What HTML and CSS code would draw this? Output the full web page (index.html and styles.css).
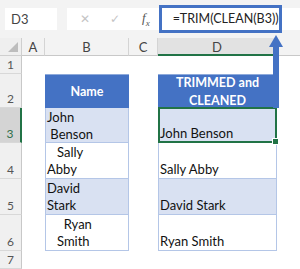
FILE: index.html
```html
<!DOCTYPE html>
<html>
<head>
<meta charset="utf-8">
<link rel="stylesheet" href="styles.css">
</head>
<body>
<div class="app">
  <div class="fbar">
    <div class="namebox">D3</div>
    <div class="editbox">
      <span class="ico x">&#x2715;</span>
      <span class="ico ok">&#x2713;</span>
      <span class="fx">f<sub>x</sub></span>
      <div class="formula">=TRIM(CLEAN(B3))</div>
    </div>
  </div>
  <div class="sheet">
    <div class="corner"><span class="tri"></span></div>
    <div class="ch">A</div>
    <div class="ch">B</div>
    <div class="ch">C</div>
    <div class="ch active">D</div>
    <div class="ch last"></div>

    <div class="rh">1</div>
    <div class="c"></div><div class="c"></div><div class="c"></div><div class="c"></div><div class="c"></div>

    <div class="rh">2</div>
    <div class="c"></div>
    <div class="c hd">Name</div>
    <div class="c"></div>
    <div class="c hd">TRIMMED and<br>CLEANED</div>
    <div class="c"></div>

    <div class="rh sel">3</div>
    <div class="c"></div>
    <div class="c tb band">John
 Benson</div>
    <div class="c"></div>
    <div class="c tb band bot selected">John Benson<span class="handle"></span></div>
    <div class="c"></div>

    <div class="rh">4</div>
    <div class="c"></div>
    <div class="c tb">   Sally
Abby</div>
    <div class="c"></div>
    <div class="c tb bot">Sally Abby</div>
    <div class="c"></div>

    <div class="rh">5</div>
    <div class="c"></div>
    <div class="c tb band">David
Stark</div>
    <div class="c"></div>
    <div class="c tb band bot">David Stark</div>
    <div class="c"></div>

    <div class="rh">6</div>
    <div class="c"></div>
    <div class="c tb">     Ryan
   Smith</div>
    <div class="c"></div>
    <div class="c tb bot">Ryan Smith</div>
    <div class="c"></div>

    <div class="rh">7</div>
    <div class="c"></div><div class="c"></div><div class="c"></div><div class="c"></div><div class="c"></div>
  </div>
  <svg class="arrow" width="20" height="80" viewBox="0 0 20 80">
    <polygon points="1,12 8,0 15,12" fill="#4472c4"/>
    <rect x="5" y="10" width="6" height="63" fill="#4472c4"/>
  </svg>
</div>
</body>
</html>
```
FILE: styles.css
```css
html, body {
  margin: 0;
  padding: 0;
  background: #ffffff;
}
.app {
  position: relative;
  width: 300px;
  height: 269px;
  overflow: hidden;
  font-family: Lato, "Open Sans", sans-serif;
  background: #ffffff;
}
.fbar {
  height: 38px;
  background: #f3f3f3;
  display: flex;
  align-items: center;
  padding-left: 5px;
  box-sizing: border-box;
}
.namebox {
  width: 52px;
  height: 22px;
  background: #ffffff;
  color: #444;
  font-size: 13px;
  line-height: 22px;
  padding-left: 6px;
  box-sizing: border-box;
}
.editbox {
  margin-left: 10px;
  flex: 1;
  height: 22px;
  background: #ffffff;
  display: flex;
  align-items: center;
  position: relative;
}
.ico {
  color: #c4c4c4;
  font-size: 12px;
  width: 14px;
  text-align: center;
  font-family: "DejaVu Sans", sans-serif;
}
.ico.x { margin-left: 11px; }
.ico.ok { margin-left: 16px; }
.fx {
  margin-left: 20px;
  font-family: "Liberation Serif", serif;
  font-style: italic;
  color: #555;
  font-size: 13px;
}
.fx sub { font-size: 9px; }
.formula {
  margin-left: 9px;
  width: 123px;
  height: 28px;
  border: 3px solid #4472c4;
  box-sizing: border-box;
  background: #ffffff;
  font-size: 12.5px;
  line-height: 22px;
  padding-left: 11px;
  color: #222;
  white-space: nowrap;
  overflow: hidden;
}
.sheet {
  display: grid;
  grid-template-columns: 22px 23px 84px 29px 119px 23px;
  grid-template-rows: 18px 18px 34px 35px 36px 36px 36px 18px;
}
.corner {
  background: #efefef;
  border-right: 1px solid #cfcfcf;
  border-bottom: 1px solid #cfcfcf;
  position: relative;
}
.tri {
  position: absolute;
  right: 3px;
  bottom: 3px;
  width: 0;
  height: 0;
  border-left: 10px solid transparent;
  border-bottom: 10px solid #bdbdbd;
}
.ch {
  background: #f3f3f3;
  border-right: 1px solid #d4d4d4;
  border-bottom: 1px solid #c8c8c8;
  color: #444;
  font-size: 13px;
  text-align: center;
  line-height: 18px;
}
.ch.active {
  background: #e2e2e2;
  border-bottom: 2px solid #217346;
}
.ch.last { border-right: none; }
.rh {
  background: #f0f0f0;
  border-right: 1px solid #c8c8c8;
  border-bottom: 1px solid #d8d8d8;
  color: #555;
  font-size: 12px;
  display: flex;
  align-items: flex-end;
  justify-content: center;
  padding-bottom: 1px;
  box-sizing: border-box;
}
.rh.sel {
  background: #d4d4d4;
  border-right: 2px solid #217346;
  color: #2f6f4a;
}
.c {
  box-sizing: border-box;
  font-size: 13px;
  color: #111;
}
.hd {
  background: #4472c4;
  color: #ffffff;
  font-weight: bold;
  font-size: 12.5px;
  display: flex;
  align-items: center;
  justify-content: center;
  text-align: center;
  line-height: 18px;
  border-top: 1px solid #8eaadb;
}
.tb {
  border-left: 1px solid #b4c6e7;
  border-right: 1px solid #b4c6e7;
  border-bottom: 1px solid #b4c6e7;
  white-space: pre;
  line-height: 17px;
  padding-left: 1px;
  padding-top: 1px;
}
.band { background: #d9e1f2; }
.bot {
  display: flex;
  align-items: flex-end;
  padding-top: 0;
  padding-bottom: 0;
}
.selected {
  position: relative;
}
.selected::after {
  content: "";
  position: absolute;
  left: -1px;
  top: -1px;
  right: -1px;
  bottom: -1px;
  border: 2px solid #217346;
}
.handle {
  position: absolute;
  right: -3px;
  bottom: -3px;
  width: 5px;
  height: 5px;
  background: #217346;
  border: 1px solid #ffffff;
  z-index: 2;
}
.arrow {
  position: absolute;
  left: 268px;
  top: 35px;
}
```
